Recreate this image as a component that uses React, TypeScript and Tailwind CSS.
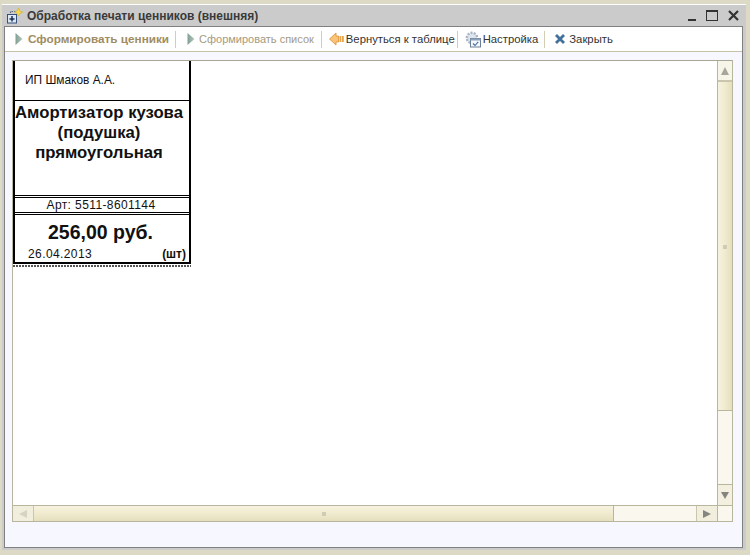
import React from "react";

const Sep = ({ className }: { className: string }) => <div className={"w-px h-[17px] bg-[#d3cdb4] shrink-0 " + className} />;

const Play = ({ className }: { className?: string }) => (
  <svg width="8" height="14" viewBox="0 0 8 14" className={"shrink-0 " + (className ?? "")}>
    <defs>
      <linearGradient id="pl" x1="0" x2="1" y1="0" y2="0">
        <stop offset="0" stopColor="#7f9f93" />
        <stop offset="1" stopColor="#b5c7bd" />
      </linearGradient>
    </defs>
    <path d="M0.5 1 L7.5 7 L0.5 13 Z" fill="url(#pl)" />
  </svg>
);

const ArrowBack = () => (
  <svg width="16" height="14" viewBox="0 0 16 14" className="shrink-0 ml-[7px]">
    <path d="M0.5 7 L7 1 V4 H9.5 V10 H7 V13 Z" fill="#f9c477" stroke="#dc8f30" strokeWidth="0.8" />
    <rect x="10.5" y="4" width="1.8" height="6" fill="#e9a548" />
    <rect x="13" y="4" width="1.8" height="6" fill="#e9a548" />
  </svg>
);

const Gear = () => (
  <svg width="18" height="18" viewBox="0 0 18 18" className="shrink-0 ml-[6px]">
    <circle cx="8" cy="8" r="5.2" fill="#dfe5ec" stroke="#a9b6c5" strokeWidth="2.4" strokeDasharray="2 1.2" />
    <rect x="6.5" y="8.5" width="10" height="8.5" fill="#f4f7fb" stroke="#6c7f95" />
    <rect x="6.5" y="8.5" width="10" height="2" fill="#8ba1bb" />
    <path d="M9 13.5 L11 15.5 L14.2 11.8" fill="none" stroke="#3d6fa8" strokeWidth="1.1" />
  </svg>
);

const CloseX = () => (
  <svg width="12" height="12" viewBox="0 0 12 12" className="shrink-0 ml-[9px]">
    <path d="M2 2 L10 10 M10 2 L2 10" stroke="#44709c" strokeWidth="2.8" />
  </svg>
);

const TitleIcon = () => (
  <svg width="16" height="16" viewBox="0 0 16 16" className="shrink-0">
    <path d="M3.5 5 V3.5 H9" fill="none" stroke="#54657e" strokeWidth="1" strokeDasharray="1.5 1" />
    <rect x="0.5" y="6.5" width="9" height="8.5" fill="#dce7f3" stroke="#35507a" />
    <path d="M5 8 V13.5 M2.5 11 H7.5" stroke="#1b2f55" strokeWidth="1.5" />
    <path d="M11.5 0 L13 3 L16 4 L13 5.3 L11.5 8 L10 5.3 L7.5 4 L10 3 Z" fill="#f7d94c" stroke="#cda32a" strokeWidth="0.5" />
  </svg>
);

const Tri = ({ dir }: { dir: "up" | "down" | "left" | "right" }) => {
  const d = {
    up: "M4 0 L8 8 H0 Z",
    down: "M0 1 H8 L4 8 Z",
    left: "M8 0 V8 L0 4 Z",
    right: "M0 0 V8 L8 4 Z",
  }[dir];
  const fill = dir === "left" ? "#d6d3c3" : dir === "up" ? "#a8a69c" : "#85847e";
  return (
    <svg width="8" height="8" viewBox="0 0 8 8">
      <path d={d} fill={fill} />
    </svg>
  );
};

export default function App() {
  const ui = { fontFamily: '"Liberation Sans", Arial, sans-serif' };
  return (
    <div className="w-[750px] h-[555px] bg-[#dcd9c5] pt-1 pl-[2px] pr-[4px] pb-[5px] overflow-hidden" style={ui}>
      <div className="h-full flex flex-col bg-[#cbcbcb] border-t border-t-white pl-[2px] pr-[3px] pb-[2px]">
        {/* Title bar */}
        <div className="h-[21px] shrink-0 flex items-center pl-[3px] pr-[4px]">
          <TitleIcon />
          <span className="ml-[4px] text-[12px] font-bold text-[#3a3a3a] whitespace-nowrap">
            Обработка печати ценников (внешняя)
          </span>
          <div className="ml-auto flex items-center">
            <div className="w-[8px] h-[2px] bg-[#333] mt-[9px]" />
            <div className="ml-[10px] w-[12px] h-[11px] border border-[#333] border-t-2" />
            <svg width="11" height="11" viewBox="0 0 11 11" className="ml-[10px]">
              <path d="M1 1 L10 10 M10 1 L1 10" stroke="#333" strokeWidth="2.2" />
            </svg>
          </div>
        </div>

        <div className="flex-1 min-h-0 flex flex-col bg-[#f7f8ff] border-t border-l border-r border-b border-[#808080]">
          {/* Toolbar */}
          <div className="h-[25px] shrink-0 bg-white border-b border-b-[#c6c0a4] flex items-center pl-[10px] text-[11.3px] whitespace-nowrap">
            <Play />
            <span className="ml-[5px] text-[11.75px] font-bold text-[#a08c62]">Сформировать ценники</span>
            <Sep className="ml-[6px]" />
            <Play className="ml-[11px]" />
            <span className="ml-[4px] text-[11px] text-[#a49a80]">Сформировать список</span>
            <Sep className="ml-[7px]" />
            <ArrowBack />
            <span className="ml-[1px] text-[#333]">Вернуться к таблице</span>
            <Sep className="ml-[2px]" />
            <Gear />
            <span className="ml-[1px] text-[#333]">Настройка</span>
            <Sep className="ml-[6px]" />
            <CloseX />
            <span className="ml-[3px] text-[#333]">Закрыть</span>
          </div>

          {/* Body */}
          <div className="flex-1 pt-[8px] pl-[7px] pr-[9px] pb-[25px] flex flex-col min-h-0">
            <div className="flex-1 min-h-0 flex flex-col border border-[#b9b69f] border-t-[#a9a695]">
              <div className="flex-1 min-h-0 flex">
                {/* Sheet */}
                <div className="flex-1 bg-white min-w-0">
                  {/* Price tag */}
                  <div className="w-[178px] text-[#111]" style={ui}>
                    <div className="border-l-2 border-r-2 border-black">
                      <div className="h-[40px] border-b border-black flex items-center pl-[10px] text-[11.9px]">
                        ИП Шмаков А.А.
                      </div>
                      <div className="h-[94px] pt-[2px] pr-[6px] text-center text-[16.7px] leading-[20px] font-bold whitespace-nowrap">
                        Амортизатор кузова
                        <br />
                        (подушка)
                        <br />
                        прямоугольная
                      </div>
                      <div className="border-t border-b border-black h-[3px]" />
                      <div className="h-[14px] pr-[2px] text-[12px] leading-[14px] text-center tracking-[0.4px]">Арт: 5511-8601144</div>
                      <div className="border-t border-b border-black h-[3px]" />
                      <div className="pt-[5px] pr-[3px] text-center text-[19.5px] leading-[25px] font-bold">256,00 руб.</div>
                      <div className="h-[17px] flex items-center justify-between pl-[13px] pr-[3px]">
                        <span className="text-[12px] tracking-[0.4px]">26.04.2013</span>
                        <span className="text-[12px] font-bold">(шт)</span>
                      </div>
                    </div>
                    <div className="h-[2px] bg-black" />
                    <div className="mt-[1px] h-[2px] bg-[repeating-linear-gradient(90deg,#555_0_2px,transparent_2px_3px)]" />
                  </div>
                </div>

                {/* Vertical scrollbar */}
                <div className="w-[15px] shrink-0 flex flex-col bg-[#f9f7ee] border-l border-l-[#b9b69f]">
                  <div className="h-[21px] shrink-0 flex items-center justify-center bg-[#f7f5e8] border-b-2 border-b-[#c9c6ad]"><Tri dir="up" /></div>
                  <div className="h-[329px] shrink-0 pt-[2px] border-b border-b-[#b9b69f] bg-gradient-to-r from-[#f6f2df] via-[#f0ebcf] to-[#e5dfbc] flex items-center justify-center">
                    <div className="w-[4px] h-[4px] bg-[#cfcbb4]" />
                  </div>
                  <div className="flex-1" />
                  <div className="h-[21px] shrink-0 flex items-center justify-center bg-[#f3f0df] border-t border-t-[#b9b69f]"><Tri dir="down" /></div>
                </div>
              </div>

              {/* Horizontal scrollbar */}
              <div className="h-[16px] shrink-0 flex bg-[#f9f7ee] border-t border-t-[#b9b69f]">
                <div className="w-[21px] shrink-0 flex items-center justify-center bg-[#f1eedd] border-r border-r-[#c9c6ad]"><Tri dir="left" /></div>
                <div className="w-[580px] shrink-0 border-r border-r-[#b9b69f] bg-gradient-to-b from-[#f6f2df] via-[#f0ebcf] to-[#e5dfbc] flex items-center justify-center">
                  <div className="w-[4px] h-[4px] bg-[#cfcbb4]" />
                </div>
                <div className="flex-1" />
                <div className="w-[21px] shrink-0 flex items-center justify-center bg-[#f1eedd] border-l border-l-[#c9c6ad]"><Tri dir="right" /></div>
                <div className="w-[15px] shrink-0 border-l border-l-[#b9b69f]" />
              </div>
            </div>
          </div>
        </div>
      </div>
    </div>
  );
}
